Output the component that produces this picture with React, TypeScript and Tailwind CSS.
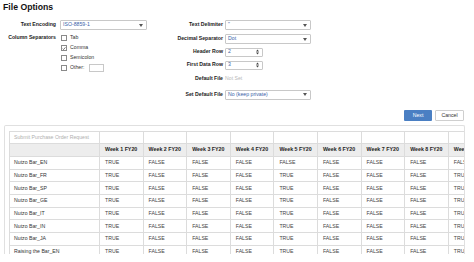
import React from "react";

const weeks = Array.from({ length: 9 }, (_, i) => `Week ${i + 1} FY20`);
const T = "TRUE";
const F = "FALSE";
const rows: [string, string[]][] = [
  ["Nutzo Bar_EN", [T, F, F, F, F, F, F, F, F]],
  ["Nutzo Bar_FR", [T, F, F, F, T, F, F, F, T]],
  ["Nutzo Bar_SP", [T, F, F, F, T, F, F, F, T]],
  ["Nutzo Bar_GE", [T, F, F, F, T, F, F, F, T]],
  ["Nutzo Bar_IT", [T, F, F, F, T, F, F, F, T]],
  ["Nutzo Bar_IN", [T, F, F, F, T, F, F, F, T]],
  ["Nutzo Bar_JA", [T, F, F, F, T, F, F, F, T]],
  ["Raising the Bar_EN", [T, F, F, F, T, F, F, F, T]],
];

function Select({ value, w, color = "text-[#3a5fa8]" }: { value: string; w: string; color?: string }) {
  return (
    <div className={`${w} h-[10px] border border-[#c8c8c8] rounded-[1px] flex items-center justify-between pl-[2px] pr-[3px] bg-white`}>
      <span className={`${color} text-[5.2px] leading-none`}>{value}</span>
      <svg width="4" height="3" viewBox="0 0 4 3"><path d="M0 0 L4 0 L2 3 Z" fill="#555" /></svg>
    </div>
  );
}

function Spin({ value }: { value: string }) {
  return (
    <div className="w-[38px] h-[9px] border border-[#c8c8c8] rounded-[1px] flex items-center justify-between pl-[2px] pr-[3px] bg-white">
      <span className="text-[#3a5fa8] text-[5.2px] leading-none">{value}</span>
      <svg width="3" height="6" viewBox="0 0 3 6">
        <path d="M0 2.4 L3 2.4 L1.5 0.4 Z" fill="#444" />
        <path d="M0 3.6 L3 3.6 L1.5 5.6 Z" fill="#444" />
      </svg>
    </div>
  );
}

function Check({ checked, label, extra }: { checked?: boolean; label: string; extra?: React.ReactNode }) {
  return (
    <div className="h-[10px] flex items-center gap-[3px]">
      <div className="w-[6px] h-[6px] border border-[#8a8a8a] bg-white flex items-center justify-center">
        {checked && (
          <svg width="5" height="5" viewBox="0 0 5 5"><path d="M0.8 2.6 L2 3.8 L4.3 1" stroke="#333" strokeWidth="0.8" fill="none" /></svg>
        )}
      </div>
      <span className="text-[5.2px] text-[#333] leading-none">{label}</span>
      {extra}
    </div>
  );
}

function LLabel({ children }: { children: React.ReactNode }) {
  return <div className="w-[56px] text-right font-bold text-[5.2px] text-[#222] leading-none">{children}</div>;
}
function RLabel({ children }: { children: React.ReactNode }) {
  return <div className="w-[63px] text-right font-bold text-[5.2px] text-[#222] leading-none">{children}</div>;
}

export default function App() {
  return (
    <div className="w-[474px] h-[262px] overflow-hidden bg-white font-['Liberation_Sans',Arial,sans-serif] text-[#333]">
      <div className="pl-[3px] pt-[3px] h-[13px] text-[8.7px] font-bold leading-none text-[#111]">File Options</div>
      <div className="flex">
        {/* left column */}
        <div className="w-[160px] flex flex-col">
          <div className="mt-[7px] h-[10px] flex items-center gap-[4px]">
            <LLabel>Text Encoding</LLabel>
            <Select value="ISO-8859-1" w="w-[87px]" />
          </div>
          <div className="mt-[3px] flex gap-[5px]">
            <div className="h-[10px] flex items-center">
              <LLabel>Column Separators</LLabel>
            </div>
            <div className="flex flex-col">
              <Check label="Tab" />
              <Check checked label="Comma" />
              <Check label="Semicolon" />
              <Check label="Other:" extra={<div className="ml-[2px] w-[15px] h-[8px] border border-[#c8c8c8] bg-white" />} />
            </div>
          </div>
        </div>
        {/* right column */}
        <div className="flex flex-col">
          <div className="mt-[7px] h-[10px] flex items-center gap-[2px]">
            <RLabel>Text Delimiter</RLabel>
            <Select value={'"'} w="w-[86px]" />
          </div>
          <div className="mt-[4px] h-[10px] flex items-center gap-[2px]">
            <RLabel>Decimal Separator</RLabel>
            <Select value="Dot" w="w-[86px]" />
          </div>
          <div className="mt-[3px] h-[10px] flex items-center gap-[2px]">
            <RLabel>Header Row</RLabel>
            <Spin value="2" />
          </div>
          <div className="mt-[3px] h-[10px] flex items-center gap-[2px]">
            <RLabel>First Data Row</RLabel>
            <Spin value="3" />
          </div>
          <div className="mt-[4px] h-[10px] flex items-center gap-[2px]">
            <RLabel>Default File</RLabel>
            <span className="text-[5.2px] text-[#b8b8b8] leading-none">Not Set</span>
          </div>
          <div className="mt-[5px] h-[11px] flex items-center gap-[2px]">
            <RLabel>Set Default File</RLabel>
            <Select value="No (keep private)" w="w-[86px]" />
          </div>
        </div>
      </div>
      {/* buttons */}
      <div className="mt-[10px] flex justify-end gap-[3px] pr-[10px]">
        <div className="w-[28px] h-[11px] bg-[#4a7fc3] rounded-[1px] flex items-center justify-center text-white text-[5.2px] leading-none">Next</div>
        <div className="w-[29px] h-[11px] border border-[#cfcfcf] rounded-[1px] bg-white flex items-center justify-center text-[#333] text-[5.2px] leading-none">Cancel</div>
      </div>
      {/* table panel */}
      <div className="mt-[4px] ml-[4px] w-[461px] border border-b-0 border-[#e0e0e0] rounded-t-[2px] pl-[4px] pt-[5px] overflow-hidden h-[129px]">
        <table className="table-fixed border-collapse text-[5.2px] leading-none w-[483px] min-w-[483px]">
          <colgroup>
            <col className="w-[90px]" />
            {weeks.map((w) => (
              <col key={w} className="w-[43.6px]" />
            ))}
          </colgroup>
          <tbody>
            <tr className="h-[12px]">
              <td className="border border-[#dcdcdc] pl-[4px] text-[#b0b0b0] whitespace-nowrap">Submit Purchase Order Request</td>
              {weeks.map((w) => (
                <td key={w} className="border border-[#dcdcdc]" />
              ))}
            </tr>
            <tr className="h-[13px] bg-[#ededed]">
              <td className="border border-[#dcdcdc]" />
              {weeks.map((w) => (
                <td key={w} className="border border-[#dcdcdc] pl-[5px] font-bold text-[#222] whitespace-nowrap overflow-hidden text-[5.3px]">{w}</td>
              ))}
            </tr>
            {rows.map(([name, vals]) => (
              <tr key={name} className="h-[12.7px]">
                <td className="border border-[#dcdcdc] pl-[4px] text-[#333] whitespace-nowrap">{name}</td>
                {vals.map((v, i) => (
                  <td key={i} className="border border-[#dcdcdc] pl-[5px] text-[#444] whitespace-nowrap overflow-hidden">{v}</td>
                ))}
              </tr>
            ))}
          </tbody>
        </table>
      </div>
    </div>
  );
}
